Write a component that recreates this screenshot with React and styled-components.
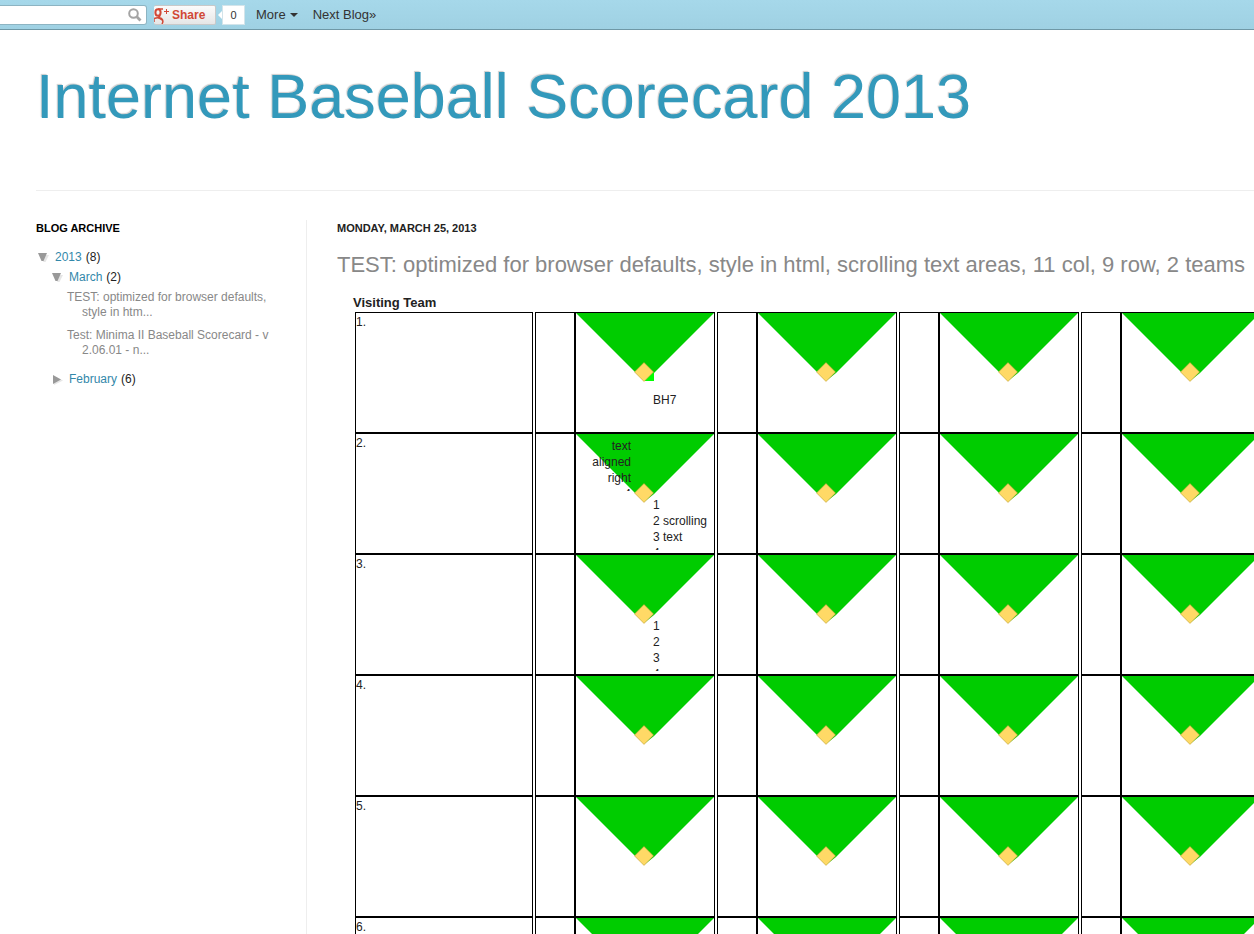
import React from "react";
import styled, { createGlobalStyle } from "styled-components";

const GlobalStyle = createGlobalStyle`
  * { box-sizing: border-box; }
  body {
    margin: 0;
    background: #fff;
    color: #222;
    font: 12px/16px "Liberation Sans", Arial, sans-serif;
    overflow-x: hidden;
  }
`;

const Navbar = styled.nav`
  display: flex;
  align-items: center;
  height: 30px;
  background: linear-gradient(#a6d8ea, #9fd1e3);
  border-bottom: 1px solid #6f98a6;
  font-size: 13px;
  color: #333;
`;

const SearchForm = styled.form`
  display: flex;
  align-items: center;
  width: 147px;
  height: 20px;
  margin-right: 7px;
  padding-right: 4px;
  background: #fff;
  border: 1px solid #8db4c2;
  border-left: 0;
  border-radius: 0 3px 3px 0;
`;

const SearchInput = styled.input`
  flex: 1;
  min-width: 0;
  height: 16px;
  padding: 0 4px;
  border: 0;
  outline: 0;
  background: transparent;
  font: inherit;
`;

const IconButton = styled.button`
  display: flex;
  padding: 0;
  border: 0;
  background: none;
`;

const ShareButton = styled.button`
  display: flex;
  align-items: center;
  gap: 2px;
  width: 62px;
  height: 20px;
  padding: 0;
  border: 1px solid #c9c9c9;
  border-left: 0;
  border-radius: 2px;
  background: linear-gradient(#fbfbfb, #e6e6e6);
  color: #d14836;
  font: bold 12px/16px "Liberation Sans", Arial, sans-serif;
`;

const ShareCount = styled.span`
  position: relative;
  width: 23px;
  height: 20px;
  margin-left: 6px;
  background: #fff;
  border: 1px solid #d3e4ea;
  font-size: 11px;
  line-height: 18px;
  text-align: center;

  &::before {
    content: "";
    position: absolute;
    left: -5px;
    top: 5px;
    border: 4px solid transparent;
    border-left: 0;
    border-right-color: #fff;
  }
`;

const NavLink = styled.a`
  display: flex;
  align-items: center;
  gap: 4px;
  margin-left: ${(p) => p.$space}px;
  color: #333;
  text-decoration: none;
`;

const Page = styled.div`
  padding-left: 36px;
  overflow-x: hidden;
`;

const Header = styled.header`
  height: 161px;
  padding: 32px 0 0;
  border-bottom: 1px solid #eee;
`;

const BlogTitle = styled.h1`
  margin: 0;
  color: #3399bb;
  font-size: 63px;
  font-weight: normal;
  line-height: 68px;
  text-shadow: -1px -1px 1px rgba(0, 0, 0, 0.2);
`;

const Columns = styled.div`
  display: flex;
  padding-top: 29px;
`;

const Sidebar = styled.aside`
  flex: none;
  width: 271px;
  padding-right: 30px;
  border-right: 1px solid #eee;
`;

const SmallHeading = styled.h2`
  margin: 0;
  color: ${(p) => p.$color};
  font-size: 11px;
  line-height: 16px;
  text-transform: uppercase;
`;

const ArchiveList = styled.ul`
  margin: 0;
  padding: ${(p) => p.$pad};
  list-style: none;
`;

const ArchiveRow = styled.div`
  display: flex;
  align-items: center;
  height: 20px;
`;

const Toggle = styled.button`
  display: flex;
  width: 19px;
  padding: 0 0 0 2px;
  border: 0;
  background: none;
`;

const ArchiveLink = styled.a`
  margin-right: 4px;
  color: #3388aa;
  text-decoration: none;
`;

const Count = styled.span`
  color: #222;
`;

const PostItem = styled.li`
  margin-bottom: 8px;
  padding-left: 15px;
  text-indent: -15px;
  line-height: 15px;
`;

const PostLink = styled.a`
  color: #888;
  text-decoration: none;
`;

const Main = styled.main`
  flex: 1;
  min-width: 0;
  padding-left: 30px;
`;

const PostTitle = styled.h3`
  margin: 15px 0 13px;
  color: #888;
  font-size: 22px;
  font-weight: normal;
  line-height: 28px;
`;

const Scorecard = styled.table`
  margin-left: 18px;
  border-collapse: collapse;
  table-layout: fixed;
  width: 2182px;
`;

const TeamName = styled.caption`
  margin-left: -2px;
  padding-top: 2px;
  font-size: 13px;
  font-weight: bold;
  line-height: 18px;
  text-align: left;
`;

const BatterCell = styled.th`
  width: 180px;
  padding: 0 2px 0 0;
  font-weight: normal;
  text-align: left;
  vertical-align: top;
`;

const BatterBox = styled.div`
  height: 121px;
  border: 1px solid #000;
  line-height: 18px;
`;

const InningCell = styled.td`
  width: 182px;
  padding: 0 2px 0 0;
`;

const Inning = styled.div`
  display: flex;
  height: 121px;
`;

const CountBox = styled.div`
  width: 40px;
  border: 1px solid #000;
`;

const FieldBox = styled.div`
  position: relative;
  width: 140px;
  border: 1px solid #000;
`;

const Note = styled.textarea`
  position: absolute;
  height: 53px;
  padding: 0;
  border: 0;
  outline: 0;
  resize: none;
  overflow: hidden;
  background: transparent;
  color: #222;
  font: 12px/16px "Liberation Sans", Arial, sans-serif;
  white-space: pre;
`;

const LeftNote = styled(Note)`
  top: 4px;
  left: 0;
  width: 55px;
  text-align: right;
`;

const RightNote = styled(Note)`
  top: 63px;
  left: 77px;
  width: 58px;
`;

const FieldDrawing = styled.svg`
  display: block;
`;

const Diamond = ({ marked }) => (
  <FieldDrawing width="138" height="119" viewBox="0 0 138 119" aria-hidden="true">
    <path d="M0 0H138L78 60L68 68L59 59Z" fill="#00cc00" />
    {marked && <rect x="68" y="59" width="10" height="9" fill="#00ff00" />}
    <path d="M68 49.500L77.500 59L68 68.500L58.500 59Z" fill="#ffd966" stroke="#c99a3c" strokeWidth=".5" />
  </FieldDrawing>
);

const Triangle = ({ open }) => (
  <svg width="12" height="11" viewBox="0 0 12 11" aria-hidden="true">
    <path d={open ? "M2 3H11L7.500 10H5.500Z" : "M2 2L11 6.500L2 11Z"} fill="#e6e6e6" />
    <path d={open ? "M0 1H9L5.500 9H3.500Z" : "M1 1L9 5.500L1 10Z"} fill="#999" />
  </svg>
);

const BATTERS = [1, 2, 3, 4, 5, 6, 7, 8, 9];
const INNINGS = [1, 2, 3, 4, 5, 6, 7, 8, 9, 10, 11];
const NOTES = {
  "1-1": { marked: true, right: "\nBH7" },
  "2-1": { left: "text\naligned\nright\n4", right: "1\n2 scrolling\n3 text\n4" },
  "3-1": { right: "1\n2\n3\n4" },
};

const ArchiveEntry = ({ href, label, count, open }) => (
  <ArchiveRow>
    <Toggle type="button" aria-label={open ? "Collapse" : "Expand"}>
      <Triangle open={open} />
    </Toggle>
    <ArchiveLink href={href}>{label}</ArchiveLink>
    <Count>({count})</Count>
  </ArchiveRow>
);

export default function App() {
  return (
    <>
      <GlobalStyle />
      <Navbar>
        <SearchForm>
          <SearchInput type="text" aria-label="Search" />
          <IconButton type="button" aria-label="Search">
            <svg width="14" height="14" viewBox="0 0 14 14" fill="none" stroke="#a4a4a4">
              <circle cx="5.500" cy="5.500" r="4.300" strokeWidth="2" />
              <path d="M8.800 8.800L12.500 12.500" strokeWidth="2.800" />
            </svg>
          </IconButton>
        </SearchForm>
        <ShareButton type="button">
          <svg width="16" height="18" viewBox="0 0 16 18" fill="none" stroke="#d14836">
            <ellipse cx="4" cy="6.500" rx="2.600" ry="3.200" strokeWidth="2" />
            <path d="M4 3H9M6 9.500L4.500 11.500L8.500 14" strokeWidth="1.700" />
            <path d="M0 12.500Q4 11 7.500 12.500Q10 14.500 8 18M0 13V16" strokeWidth="1.500" />
            <path d="M10 5.500H15M12.500 3V8" strokeWidth="1" />
          </svg>
          Share
        </ShareButton>
        <ShareCount>0</ShareCount>
        <NavLink href="#more" $space={11}>
          More
          <svg width="8" height="4" viewBox="0 0 8 4"><path d="M0 0H8L4 4Z" fill="#333" /></svg>
        </NavLink>
        <NavLink href="#next" $space={15}>Next Blog»</NavLink>
      </Navbar>
      <Page>
        <Header>
          <BlogTitle>Internet Baseball Scorecard 2013</BlogTitle>
        </Header>
        <Columns>
          <Sidebar>
            <SmallHeading $color="#000">Blog Archive</SmallHeading>
            <ArchiveList $pad="11px 0 0">
              <li>
                <ArchiveEntry href="#2013" label="2013" count={8} open />
                <ArchiveList $pad="0 0 0 14px">
                  <li>
                    <ArchiveEntry href="#march" label="March" count={2} open />
                    <ArchiveList $pad="3px 0 3px 17px">
                      <PostItem>
                        <PostLink href="#post-1">TEST: optimized for browser defaults, style in htm...</PostLink>
                      </PostItem>
                      <PostItem>
                        <PostLink href="#post-2">Test: Minima II Baseball Scorecard - v 2.06.01 - n...</PostLink>
                      </PostItem>
                    </ArchiveList>
                  </li>
                  <li>
                    <ArchiveEntry href="#february" label="February" count={6} />
                  </li>
                </ArchiveList>
              </li>
            </ArchiveList>
          </Sidebar>
          <Main>
            <SmallHeading $color="#222">Monday, March 25, 2013</SmallHeading>
            <PostTitle>TEST: optimized for browser defaults, style in html, scrolling text areas, 11 col, 9 row, 2 teams</PostTitle>
            <Scorecard>
              <TeamName>Visiting Team</TeamName>
              <tbody>
                {BATTERS.map((batter) => (
                  <tr key={batter}>
                    <BatterCell scope="row">
                      <BatterBox>{batter}.</BatterBox>
                    </BatterCell>
                    {INNINGS.map((inning) => {
                      const note = NOTES[`${batter}-${inning}`] || {};
                      return (
                        <InningCell key={inning}>
                          <Inning>
                            <CountBox />
                            <FieldBox>
                              <Diamond marked={note.marked} />
                              {note.left && (
                                <LeftNote aria-label="Advance notes" defaultValue={note.left} />
                              )}
                              {note.right && (
                                <RightNote aria-label="At-bat notes" defaultValue={note.right} />
                              )}
                            </FieldBox>
                          </Inning>
                        </InningCell>
                      );
                    })}
                  </tr>
                ))}
              </tbody>
            </Scorecard>
          </Main>
        </Columns>
      </Page>
    </>
  );
}
